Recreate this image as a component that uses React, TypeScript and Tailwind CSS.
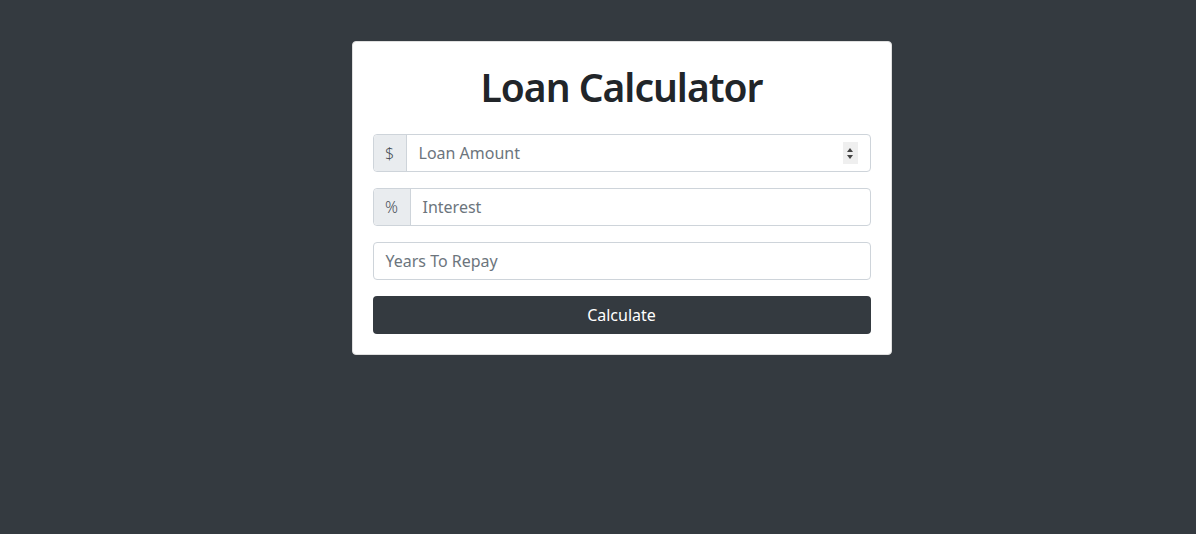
import React from "react";

const font = { fontFamily: '"Noto Sans", "Open Sans", sans-serif' };

const App: React.FC = () => {
  return (
    <div className="flex min-h-[534px] w-full justify-center bg-[#343a40] pt-[41px] pl-[47px]" style={font}>
      <div className="h-fit w-[540px] rounded-[4px] border border-[#dfdfdf] bg-white px-[20px] pt-[20px] pb-[20px]">
        <h1 className="mb-[23px] h-[49px] text-center text-[39px] font-semibold leading-[49px] tracking-[-1px] text-[#212529]">
          Loan Calculator
        </h1>

        <div className="flex h-[38px] rounded-[4px] border border-[#ced4da] text-[16px]">
          <span className="flex w-[33px] items-center justify-center rounded-l-[4px] border-r border-[#ced4da] bg-[#e9ecef] font-light text-[#495057]">
            $
          </span>
          <div className="flex flex-1 items-center justify-between pl-[12px] pr-[12px] text-[#6c757d]">
            <span>Loan Amount</span>
            <div className="flex h-[22px] w-[15px] flex-col items-center justify-center gap-[3px] bg-[#efefef]">
              <span className="h-0 w-0 border-x-[3.5px] border-b-[4px] border-x-transparent border-b-[#444]" />
              <span className="h-0 w-0 border-x-[3.5px] border-t-[4px] border-x-transparent border-t-[#444]" />
            </div>
          </div>
        </div>

        <div className="mt-[16px] flex h-[38px] rounded-[4px] border border-[#ced4da] text-[16px]">
          <span className="flex w-[37px] items-center justify-center rounded-l-[4px] border-r border-[#ced4da] bg-[#e9ecef] font-light text-[#495057]">
            %
          </span>
          <div className="flex flex-1 items-center pl-[12px] text-[#6c757d]">Interest</div>
        </div>

        <div className="mt-[16px] flex h-[38px] items-center rounded-[4px] border border-[#ced4da] pl-[12px] text-[16px] text-[#6c757d]">
          Years To Repay
        </div>

        <button className="mt-[16px] flex h-[38px] w-full items-center justify-center rounded-[4px] bg-[#343a40] text-[16px] text-white">
          Calculate
        </button>
      </div>
    </div>
  );
};

export default App;
